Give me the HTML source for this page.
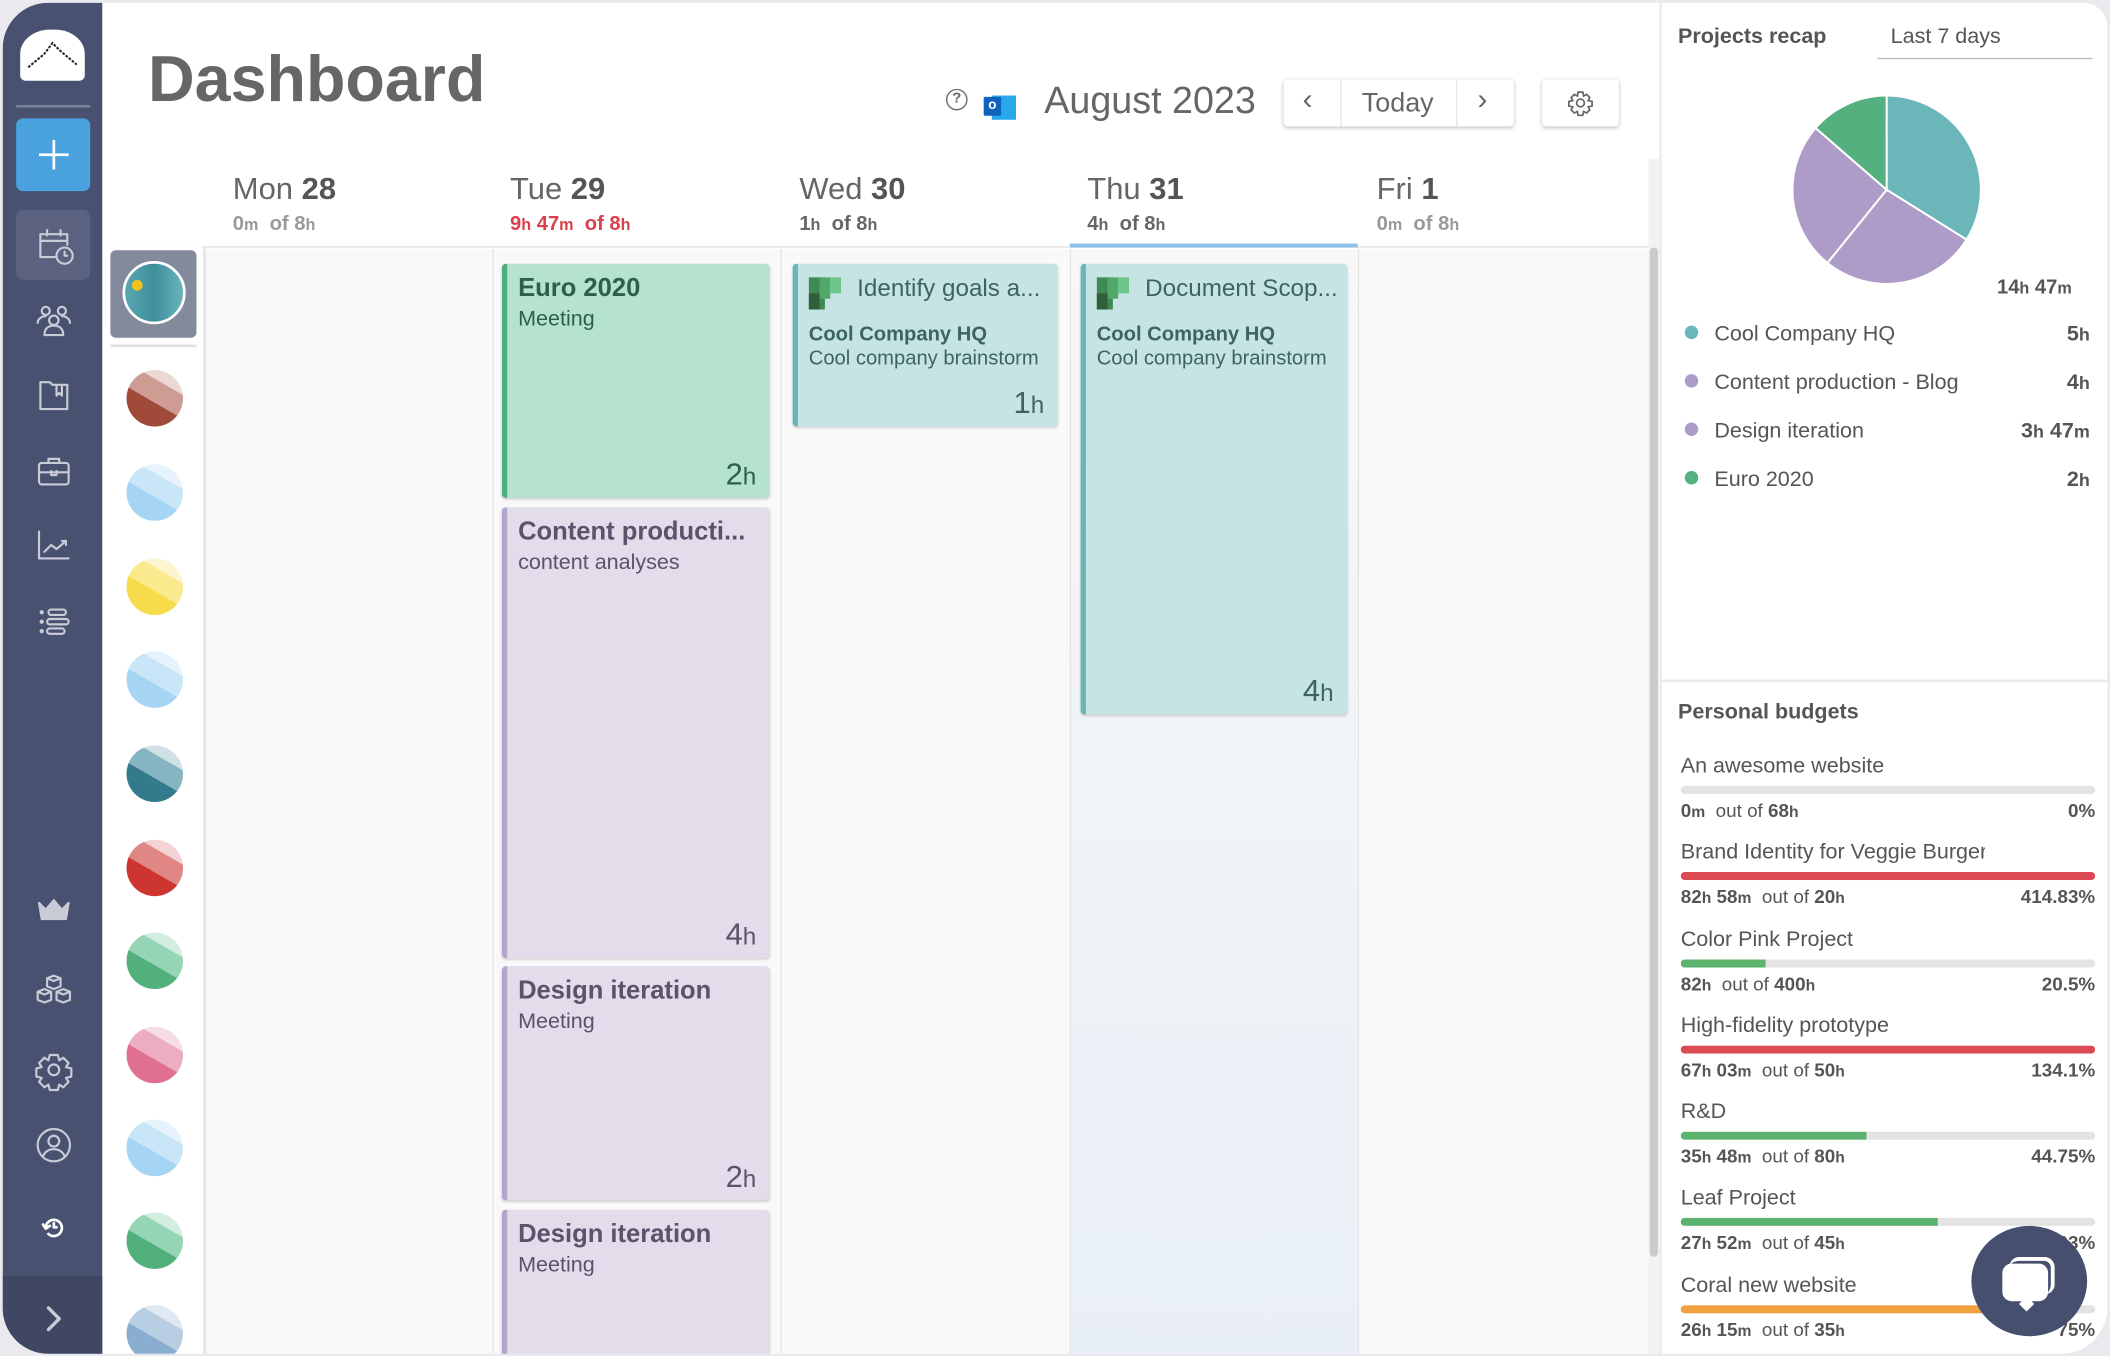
<!DOCTYPE html>
<html><head><meta charset="utf-8">
<style>
*{box-sizing:border-box;margin:0;padding:0}
html,body{width:2110px;height:1356px;overflow:hidden;background:#e9e9ee}
body{font-family:"Liberation Sans",sans-serif;color:#555}
#w{position:absolute;left:0;top:0;width:1568px;height:1008px;transform:scale(1.345663);transform-origin:0 0}
.a{position:absolute}
#win{left:2px;top:2px;width:1564px;height:1004px;background:#fff;border-radius:34px 18px 34px 34px;overflow:hidden}
#side{left:0;top:0;width:74px;height:1004px;background:#495170}
.ic{position:absolute;left:18px;width:40px;height:40px}
.ic svg{width:40px;height:40px;fill:none;stroke:#c9ccd6;stroke-width:1.6;stroke-linecap:round;stroke-linejoin:round}
.col{position:absolute;top:183px;height:825px;background:#f9f9f9;border-left:1px solid #e4e4e4}
.dh{position:absolute;top:125px;font-size:23px;color:#666}
.dh b{font-weight:600;color:#555}
.ds{position:absolute;top:156px;font-size:15px;color:#999;font-weight:bold}
.ds small{font-size:12px}
.ev{position:absolute;border-radius:3px;box-shadow:0 1px 2px rgba(0,0,0,.18);padding:8px 8px}
.ev .t{font-size:19px;font-weight:bold}
.ev .s{font-size:16px;margin-top:3px}
.ev .h{position:absolute;right:10px;bottom:4px;font-size:23px}
.av{position:absolute;left:92px;width:42px;height:42px;border-radius:50%}
.lg{position:absolute;left:1250px;font-size:16px;color:#555}
.lg i{display:inline-block;width:10px;height:10px;border-radius:50%;margin-right:12px;vertical-align:1px}
.lg span{position:absolute;text-align:right;font-weight:bold;white-space:nowrap}
.bd{position:absolute;left:1247px;width:308px}
.bd .n{font-size:16px;color:#555;white-space:nowrap;overflow:hidden;height:21px}
.bd .b{height:6px;border-radius:3px;background:#e3e3e3;margin-top:2px;overflow:hidden}
.bd .b div{height:6px}
.bd .v{font-size:14px;color:#555;margin-top:4px;position:relative}
.bd .v b{font-weight:bold}
.bd .v .p{position:absolute;right:0;top:0;font-weight:bold}
</style></head><body>
<div id="w">
<div id="win" class="a">
 <div id="side" class="a">
  <div class="a" style="left:13px;top:20px;width:48px;height:38px;background:#fff;border-radius:22px 22px 4px 4px/18px 18px 4px 4px;overflow:hidden">
   <svg width="48" height="38"><path d="M6 28 L18 18 L24 10 L30 16 L42 26" stroke="#222" stroke-width="1.5" fill="none" stroke-dasharray="2 1"/></svg></div>
  <div class="a" style="left:10px;top:76px;width:55px;height:2px;background:#7b8199"></div>
  <div class="a" style="left:10px;top:86px;width:55px;height:54px;background:#4aa3df;border-radius:5px"></div>
  <div class="a" style="left:27px;top:112px;width:22px;height:2px;background:#fff"></div>
  <div class="a" style="left:37px;top:102px;width:2px;height:22px;background:#fff"></div>
  <div class="a" style="left:10px;top:154px;width:55px;height:52px;background:#5a6280;border-radius:5px"></div>
  <div class="ic" style="top:160px"><svg viewBox="0 0 40 40"><path d="M10 29V12h20v8M10 17h20M15 9v4M25 9v4M10 29h11"/><circle cx="28" cy="28" r="6"/><path d="M28 25v3h2"/></svg></div>
  <div class="ic" style="top:216px"><svg viewBox="0 0 40 40"><circle cx="14" cy="13" r="3"/><circle cx="26" cy="13" r="3"/><circle cx="20" cy="20" r="3.5"/><path d="M8 22c0-3 3-5 6-5M32 22c0-3-3-5-6-5M13 31c0-5 3-7 7-7s7 2 7 7z"/></svg></div>
  <div class="ic" style="top:272px"><svg viewBox="0 0 40 40"><path d="M10 10h7l2 2h11v18H10zM22 12v8l2-2 2 2v-8"/></svg></div>
  <div class="ic" style="top:328px"><svg viewBox="0 0 40 40"><rect x="9" y="14" width="22" height="16" rx="2"/><path d="M16 14v-3h8v3M9 21h22M18 20v3h4v-3"/></svg></div>
  <div class="ic" style="top:384px"><svg viewBox="0 0 40 40"><path d="M9 9v20h22M13 24l5-5 4 3 7-6M26 16h3v3"/></svg></div>
  <div class="ic" style="top:440px"><svg viewBox="0 0 40 40"><circle cx="11" cy="13" r=".8"/><circle cx="11" cy="20" r=".8"/><circle cx="11" cy="27" r=".8"/><rect x="16" y="11" width="13" height="4" rx="2"/><rect x="15" y="18" width="16" height="4" rx="2"/><rect x="15" y="25" width="13" height="4" rx="2"/></svg></div>
  <div class="ic" style="top:655px"><svg viewBox="0 0 40 40"><path d="M9 14l5 5 6-7 6 7 5-5-2 12H11z" fill="#c9ccd6"/></svg></div>
  <div class="ic" style="top:713px"><svg viewBox="0 0 40 40"><path d="M15 12l5-2 5 2v6l-5 2-5-2zM8 22l5-2 5 2v6l-5 2-5-2zM22 22l5-2 5 2v6l-5 2-5-2zM15 12l5 2 5-2M8 22l5 2 5-2M22 22l5 2 5-2"/></svg></div>
  <div class="ic" style="top:773px"><svg viewBox="0 0 40 40"><path d="M17 9h6l1 4 3-2 4 4-2 3 4 1v6l-4 1 2 3-4 4-3-2-1 4h-6l-1-4-3 2-4-4 2-3-4-1v-6l4-1-2-3 4-4 3 2z"/><circle cx="20" cy="20" r="4"/></svg></div>
  <div class="ic" style="top:829px"><svg viewBox="0 0 40 40"><circle cx="20" cy="20" r="12"/><circle cx="20" cy="17" r="4"/><path d="M12 28c2-4 5-5 8-5s6 1 8 5"/></svg></div>
  <div class="ic" style="top:890px"><svg viewBox="0 0 40 40" style="stroke:#fff;stroke-width:2"><path d="M14 20a6 6 0 1 1 2 5M12 18l2 3 3-2M20 17v3h2"/></svg></div>
  <div class="a" style="left:0;top:946px;width:74px;height:60px;background:#3f4762"></div>
  <div class="ic" style="top:958px"><svg viewBox="0 0 40 40" style="stroke-width:2.5"><path d="M16 12l8 8-8 8"/></svg></div>
 </div>

 <div class="a" style="left:108px;top:30px;font-size:48px;font-weight:bold;color:#666">Dashboard</div>
 <div class="a" style="left:701px;top:64px;width:16px;height:16px;border:1.5px solid #666;border-radius:50%;font-size:11px;text-align:center;line-height:13px;color:#666;font-weight:bold">?</div>
 <div class="a" style="left:735px;top:69px;width:18px;height:18px;background:#28a8ea"></div>
 <div class="a" style="left:729px;top:70px;width:13px;height:14px;background:#0f63bd;color:#fff;font-size:10px;font-weight:bold;text-align:center;line-height:14px;border-radius:1px">o</div>
 <div class="a" style="left:774px;top:57px;font-size:28px;color:#666">August 2023</div>
 <div class="a" style="left:952px;top:57px;width:171px;height:35px;background:#fff;border-radius:3px;box-shadow:0 1px 3px rgba(0,0,0,.25)">
  <div class="a" style="left:42px;top:0;width:1px;height:35px;background:#e6e6e6"></div>
  <div class="a" style="left:128px;top:0;width:1px;height:35px;background:#e6e6e6"></div>
  <div class="a" style="left:14px;top:2px;font-size:22px;color:#666">‹</div>
  <div class="a" style="left:58px;top:7px;font-size:20px;color:#666">Today</div>
  <div class="a" style="left:144px;top:2px;font-size:22px;color:#666">›</div>
 </div>
 <div class="a" style="left:1144px;top:57px;width:57px;height:35px;background:#fff;border-radius:3px;box-shadow:0 1px 3px rgba(0,0,0,.25)">
  <svg class="a" style="left:17px;top:6px" width="23" height="23" viewBox="0 0 40 40" fill="none" stroke="#666" stroke-width="2.2"><path d="M17 6h6l1 5 4-2 4 4-2 4 5 1v6l-5 1 2 4-4 4-4-2-1 5h-6l-1-5-4 2-4-4 2-4-5-1v-6l5-1-2-4 4-4 4 2z"/><circle cx="20" cy="20" r="5"/></svg>
 </div>

 <div class="a" style="left:76px;top:181px;width:1148px;height:1px;background:#e0e0e0"></div>
 <div class="col" style="left:150px;width:214px"></div>
 <div class="col" style="left:364px;width:214px"></div>
 <div class="col" style="left:578px;width:215px"></div>
 <div class="col" style="left:793px;width:214px;background:linear-gradient(#f7f7f7,#e9eff7)"></div>
 <div class="col" style="left:1007px;width:216px"></div>
 <div class="a" style="left:793px;top:179px;width:214px;height:3px;background:#8fc0e8"></div>
 <div class="a" style="left:1223px;top:116px;width:8px;height:890px;background:#f2f2f2"></div>
 <div class="a" style="left:1224px;top:182px;width:6px;height:750px;background:#c9c9ce;border-radius:3px"></div>

 <div class="dh" style="left:171px">Mon <b>28</b></div><div class="ds" style="left:171px">0<small>m</small>&nbsp; of 8<small>h</small></div>
 <div class="dh" style="left:377px">Tue <b>29</b></div><div class="ds" style="left:377px;color:#d9404b">9<small>h</small> 47<small>m</small>&nbsp; of 8<small>h</small></div>
 <div class="dh" style="left:592px">Wed <b>30</b></div><div class="ds" style="left:592px;color:#666">1<small>h</small>&nbsp; of 8<small>h</small></div>
 <div class="dh" style="left:806px">Thu <b>31</b></div><div class="ds" style="left:806px;color:#666">4<small>h</small>&nbsp; of 8<small>h</small></div>
 <div class="dh" style="left:1021px">Fri <b>1</b></div><div class="ds" style="left:1021px">0<small>m</small>&nbsp; of 8<small>h</small></div>

 <div class="a" style="left:76px;top:181px;width:74px;height:825px;background:#fff;border-right:1px solid #e4e4e4"></div>
 <div class="a" style="left:80px;top:184px;width:64px;height:65px;background:#838a9b;border-radius:4px"></div>
 <div class="a" style="left:89px;top:192px;width:47px;height:47px;border-radius:50%;border:2px solid #fff;background:linear-gradient(90deg,#5aa6b0,#3f8f9c 50%,#6ab3bb)"></div>
 <div class="a" style="left:96px;top:206px;width:8px;height:8px;border-radius:50%;background:#f2c320"></div>
 <div class="a" style="left:80px;top:254px;width:64px;height:2px;background:#e2e2e2"></div>

 <div class="av" style="top:273px;background:linear-gradient(30deg,#a04a3a 45%,#cf9c93 45% 72%,#ecd9d5 72%)"></div>
 <div class="av" style="top:343px;background:linear-gradient(30deg,#a5d5f3 45%,#c9e5f8 45% 72%,#e6f3fc 72%)"></div>
 <div class="av" style="top:413px;background:linear-gradient(30deg,#f6dc4a 45%,#faea8d 45% 72%,#fcf5cd 72%)"></div>
 <div class="av" style="top:482px;background:linear-gradient(30deg,#a5d5f3 45%,#c9e5f8 45% 72%,#e6f3fc 72%)"></div>
 <div class="av" style="top:552px;background:linear-gradient(30deg,#337a8c 45%,#84b5c0 45% 72%,#cfe1e5 72%)"></div>
 <div class="av" style="top:622px;background:linear-gradient(30deg,#cd3530 45%,#e08685 45% 72%,#f3d3d3 72%)"></div>
 <div class="av" style="top:691px;background:linear-gradient(30deg,#52b07d 45%,#95d4b5 45% 72%,#d3ede1 72%)"></div>
 <div class="av" style="top:761px;background:linear-gradient(30deg,#e0708f 45%,#ebadbf 45% 72%,#f6dde5 72%)"></div>
 <div class="av" style="top:830px;background:linear-gradient(30deg,#a5d5f3 45%,#c9e5f8 45% 72%,#e6f3fc 72%)"></div>
 <div class="av" style="top:899px;background:linear-gradient(30deg,#52b07d 45%,#95d4b5 45% 72%,#d3ede1 72%)"></div>
 <div class="av" style="top:968px;background:linear-gradient(30deg,#8aaed0 45%,#b8cee3 45% 72%,#e0e8f1 72%)"></div>

 <div class="ev" style="left:371px;top:194px;width:199px;height:174px;background:#b5e3cf;border-left:4px solid #4caf7d;color:#2c6148"><div class="t">Euro 2020</div><div class="s">Meeting</div><div class="h">2<small style="font-size:18px">h</small></div></div>
 <div class="ev" style="left:371px;top:375px;width:199px;height:335px;background:#e3dcea;border-left:4px solid #b4a3cf;color:#5b526b"><div class="t">Content producti...</div><div class="s">content analyses</div><div class="h">4<small style="font-size:18px">h</small></div></div>
 <div class="ev" style="left:371px;top:716px;width:199px;height:174px;background:#e3dcea;border-left:4px solid #b4a3cf;color:#5b526b"><div class="t">Design iteration</div><div class="s">Meeting</div><div class="h">2<small style="font-size:18px">h</small></div></div>
 <div class="ev" style="left:371px;top:897px;width:199px;height:120px;background:#e3dcea;border-left:4px solid #b4a3cf;color:#5b526b"><div class="t">Design iteration</div><div class="s">Meeting</div></div>

 <div class="ev" style="left:587px;top:194px;width:197px;height:121px;background:#c6e4e4;border-left:4px solid #6ab5b8;color:#3d6464">
  <div style="position:relative;height:26px"><svg class="a" style="left:0;top:2px" width="24" height="24"><rect x="0" y="0" width="12" height="24" fill="#3e8a52"/><rect x="8" y="0" width="8" height="16" fill="#52a86a"/><rect x="16" y="0" width="8" height="12" fill="#6cc68a"/><rect x="0" y="12" width="8" height="12" fill="#2e5e3a"/></svg><span class="a" style="left:36px;top:0;font-size:18px;white-space:nowrap">Identify goals a...</span></div>
  <div style="font-size:15px;font-weight:bold;margin-top:10px">Cool Company HQ</div><div style="font-size:15px;margin-top:1px">Cool company brainstorm</div><div class="h">1<small style="font-size:18px">h</small></div></div>
 <div class="ev" style="left:801px;top:194px;width:198px;height:335px;background:#c6e4e4;border-left:4px solid #6ab5b8;color:#3d6464">
  <div style="position:relative;height:26px"><svg class="a" style="left:0;top:2px" width="24" height="24"><rect x="0" y="0" width="12" height="24" fill="#3e8a52"/><rect x="8" y="0" width="8" height="16" fill="#52a86a"/><rect x="16" y="0" width="8" height="12" fill="#6cc68a"/><rect x="0" y="12" width="8" height="12" fill="#2e5e3a"/></svg><span class="a" style="left:36px;top:0;font-size:18px;white-space:nowrap">Document Scop...</span></div>
  <div style="font-size:15px;font-weight:bold;margin-top:10px">Cool Company HQ</div><div style="font-size:15px;margin-top:1px">Cool company brainstorm</div><div class="h">4<small style="font-size:18px">h</small></div></div>

 <div class="a" style="left:1231px;top:0;width:2px;height:1004px;background:#ececec"></div>
 <div class="a" style="left:1233px;top:503px;width:335px;height:2px;background:#ececec"></div>
 <div class="a" style="left:1245px;top:17px;font-size:16px;font-weight:bold;color:#555">Projects recap</div>
 <div class="a" style="left:1393px;top:17px;width:160px;height:25px;border-bottom:1px solid #bbb;font-size:16px;color:#555;padding-left:10px">Last 7 days</div>
 <svg class="a" style="left:1325px;top:64px" width="150" height="150" viewBox="-75 -75 150 150">
  <g stroke="#fff" stroke-width="1.5">
  <path d="M0 0 L0 -70 A70 70 0 0 1 59.4 37.1Z" fill="#6ab6b8"/>
  <path d="M0 0 L59.4 37.1 A70 70 0 0 1 -44 54.4Z" fill="#ad9bc8"/>
  <path d="M0 0 L-44 54.4 A70 70 0 0 1 -52.8 -45.9Z" fill="#ad9bc8"/>
  <path d="M0 0 L-52.8 -45.9 A70 70 0 0 1 0 -70Z" fill="#54b07e"/></g></svg>
 <div class="a" style="left:1482px;top:203px;font-size:15px;font-weight:bold;color:#555">14<small style="font-size:12px">h</small> 47<small style="font-size:12px">m</small></div>
 <div class="lg" style="top:238px"><i style="background:#6ab6b8"></i>Cool Company HQ<span style="left:260px;width:41px">5<small>h</small></span></div>
 <div class="lg" style="top:274px"><i style="background:#ad9bc8"></i>Content production - Blog<span style="left:260px;width:41px">4<small>h</small></span></div>
 <div class="lg" style="top:310px"><i style="background:#ad9bc8"></i>Design iteration<span style="left:221px;width:80px">3<small>h</small> 47<small>m</small></span></div>
 <div class="lg" style="top:346px"><i style="background:#54b07e"></i>Euro 2020<span style="left:260px;width:41px">2<small>h</small></span></div>

 <div class="a" style="left:1245px;top:519px;font-size:16px;font-weight:bold;color:#555">Personal budgets</div>
 <div class="bd" style="top:559px"><div class="n">An awesome website</div><div class="b"><div style="width:0"></div></div><div class="v"><b>0<small>m</small></b>&nbsp; out of <b>68<small>h</small></b><span class="p">0%</span></div></div>
 <div class="bd" style="top:623px"><div class="n" style="width:226px">Brand Identity for Veggie Burger</div><div class="b"><div style="width:100%;background:#dc4a53"></div></div><div class="v"><b>82<small>h</small> 58<small>m</small></b>&nbsp; out of <b>20<small>h</small></b><span class="p">414.83%</span></div></div>
 <div class="bd" style="top:688px"><div class="n">Color Pink Project</div><div class="b"><div style="width:20.5%;background:#5bb36e"></div></div><div class="v"><b>82<small>h</small></b>&nbsp; out of <b>400<small>h</small></b><span class="p">20.5%</span></div></div>
 <div class="bd" style="top:752px"><div class="n">High-fidelity prototype</div><div class="b"><div style="width:100%;background:#dc4a53"></div></div><div class="v"><b>67<small>h</small> 03<small>m</small></b>&nbsp; out of <b>50<small>h</small></b><span class="p">134.1%</span></div></div>
 <div class="bd" style="top:816px"><div class="n">R&amp;D</div><div class="b"><div style="width:44.75%;background:#5bb36e"></div></div><div class="v"><b>35<small>h</small> 48<small>m</small></b>&nbsp; out of <b>80<small>h</small></b><span class="p">44.75%</span></div></div>
 <div class="bd" style="top:880px"><div class="n">Leaf Project</div><div class="b"><div style="width:61.93%;background:#5bb36e"></div></div><div class="v"><b>27<small>h</small> 52<small>m</small></b>&nbsp; out of <b>45<small>h</small></b><span class="p">61.93%</span></div></div>
 <div class="bd" style="top:945px"><div class="n">Coral new website</div><div class="b"><div style="width:75%;background:#f0a03c"></div></div><div class="v"><b>26<small>h</small> 15<small>m</small></b>&nbsp; out of <b>35<small>h</small></b><span class="p">75%</span></div></div>

 <div class="a" style="left:1463px;top:909px;width:86px;height:82px;border-radius:50%;background:#46506e"></div>
 <div class="a" style="left:1491px;top:932px;width:34px;height:28px;border:3px solid #fff;border-radius:8px;border-left:none;border-bottom:none"></div>
 <div class="a" style="left:1486px;top:937px;width:34px;height:28px;background:#fff;border-radius:7px"></div>
 <div class="a" style="left:1500px;top:963px;width:8px;height:8px;background:#fff;transform:rotate(45deg)"></div>
</div>
</div>
</body></html>
